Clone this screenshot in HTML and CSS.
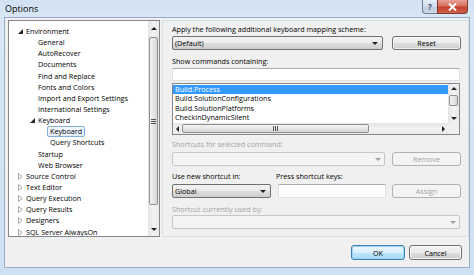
FILE: index.html
```html
<!DOCTYPE html>
<html>
<head>
<meta charset="utf-8">
<link rel="stylesheet" href="styles.css">
</head>
<body>
<div class="window">
  <div class="titlebar">
    <span class="title">Options</span>
    <div class="caption">
      <div class="cbtn help">?</div>
      <div class="cbtn close">
        <svg width="9" height="8" viewBox="0 0 9 8"><path d="M1 0.5 L8 7.5 M8 0.5 L1 7.5" stroke="#fff" stroke-width="2"/></svg>
      </div>
    </div>
  </div>
  <div class="client">
    <div class="main">
      <div class="tree">
        <div class="tree-items">
          <div class="row lvl0"><span class="exp"><svg width="5" height="5" viewBox="0 0 5 5"><polygon points="5,0 5,5 0,5" fill="#262626"/></svg></span><span>Environment</span></div>
          <div class="row lvl1"><span class="exp"></span><span>General</span></div>
          <div class="row lvl1"><span class="exp"></span><span>AutoRecover</span></div>
          <div class="row lvl1"><span class="exp"></span><span>Documents</span></div>
          <div class="row lvl1"><span class="exp"></span><span>Find and Replace</span></div>
          <div class="row lvl1"><span class="exp"></span><span>Fonts and Colors</span></div>
          <div class="row lvl1"><span class="exp"></span><span>Import and Export Settings</span></div>
          <div class="row lvl1"><span class="exp"></span><span>International Settings</span></div>
          <div class="row lvl1"><span class="exp"><svg width="5" height="5" viewBox="0 0 5 5"><polygon points="5,0 5,5 0,5" fill="#262626"/></svg></span><span>Keyboard</span></div>
          <div class="row lvl2"><span class="exp"></span><span class="sel">Keyboard</span></div>
          <div class="row lvl2"><span class="exp"></span><span>Query Shortcuts</span></div>
          <div class="row lvl1"><span class="exp"></span><span>Startup</span></div>
          <div class="row lvl1"><span class="exp"></span><span>Web Browser</span></div>
          <div class="row lvl0"><span class="exp"><svg width="5" height="7" viewBox="0 0 5 7"><polygon points="0.5,0.5 4.2,3.5 0.5,6.5" fill="none" stroke="#a8a8a8" stroke-width="1"/></svg></span><span>Source Control</span></div>
          <div class="row lvl0"><span class="exp"><svg width="5" height="7" viewBox="0 0 5 7"><polygon points="0.5,0.5 4.2,3.5 0.5,6.5" fill="none" stroke="#a8a8a8" stroke-width="1"/></svg></span><span>Text Editor</span></div>
          <div class="row lvl0"><span class="exp"><svg width="5" height="7" viewBox="0 0 5 7"><polygon points="0.5,0.5 4.2,3.5 0.5,6.5" fill="none" stroke="#a8a8a8" stroke-width="1"/></svg></span><span>Query Execution</span></div>
          <div class="row lvl0"><span class="exp"><svg width="5" height="7" viewBox="0 0 5 7"><polygon points="0.5,0.5 4.2,3.5 0.5,6.5" fill="none" stroke="#a8a8a8" stroke-width="1"/></svg></span><span>Query Results</span></div>
          <div class="row lvl0"><span class="exp"><svg width="5" height="7" viewBox="0 0 5 7"><polygon points="0.5,0.5 4.2,3.5 0.5,6.5" fill="none" stroke="#a8a8a8" stroke-width="1"/></svg></span><span>Designers</span></div>
          <div class="row lvl0"><span class="exp"><svg width="5" height="7" viewBox="0 0 5 7"><polygon points="0.5,0.5 4.2,3.5 0.5,6.5" fill="none" stroke="#a8a8a8" stroke-width="1"/></svg></span><span>SQL Server AlwaysOn</span></div>
        </div>
        <div class="vscroll tree-scroll">
          <div class="sbtn"><span class="arr-up"></span></div>
          <div class="thumb tree-thumb"><span class="grip"></span></div>
          <div class="spacer"></div>
          <div class="sbtn"><span class="arr-down"></span></div>
        </div>
      </div>
      <div class="panel">
        <div class="label l1">Apply the following additional keyboard mapping scheme:</div>
        <div class="line r1">
          <div class="combo combo-scheme"><span>(Default)</span><span class="arr-down"></span></div>
          <div class="btn">Reset</div>
        </div>
        <div class="label l2">Show commands containing:</div>
        <div class="textbox tb-full"></div>
        <div class="listbox">
          <div class="list-body">
            <div class="items">
              <div class="item selected">Build.Process</div>
              <div class="item">Build.SolutionConfigurations</div>
              <div class="item">Build.SolutionPlatforms</div>
              <div class="item">CheckInDynamicSilent</div>
            </div>
            <div class="vscroll list-vscroll">
              <div class="sbtn small"><span class="arr-up"></span></div>
              <div class="thumb list-thumb"></div>
              <div class="spacer"></div>
              <div class="sbtn small"><span class="arr-down"></span></div>
            </div>
          </div>
          <div class="hbar">
            <div class="hscroll">
              <div class="hbtn"><span class="arr-left"></span></div>
              <div class="hthumb"><span class="hgrip"></span></div>
              <div class="spacer"></div>
              <div class="hbtn"><span class="arr-right"></span></div>
            </div>
            <div class="corner"></div>
          </div>
        </div>
        <div class="label disabled l3">Shortcuts for selected command:</div>
        <div class="line r2">
          <div class="combo disabled combo-mid"><span></span><span class="arr-down gray"></span></div>
          <div class="btn disabled">Remove</div>
        </div>
        <div class="labels-row">
          <div class="label col-a">Use new shortcut in:</div>
          <div class="label">Press shortcut keys:</div>
        </div>
        <div class="line r3">
          <div class="combo combo-global"><span>Global</span><span class="arr-down"></span></div>
          <div class="textbox tb-keys"></div>
          <div class="btn disabled">Assign</div>
        </div>
        <div class="label disabled l5">Shortcut currently used by:</div>
        <div class="combo disabled combo-full"><span></span><span class="arr-down gray"></span></div>
      </div>
    </div>
    <div class="footer">
      <div class="btn ok">OK</div>
      <div class="btn cancel">Cancel</div>
    </div>
  </div>
</div>
</body>
</html>
```
FILE: styles.css
```css
* { box-sizing: border-box; }
html, body { margin: 0; padding: 0; }
body {
  font-family: "Open Sans", "Noto Sans", sans-serif;
  font-size: 7.2px;
  color: #000;
  background: #d6e5f5;
}
.window {
  width: 474px;
  height: 275px;
  overflow: hidden;
  background: linear-gradient(180deg, #d2e2f3 0px, #d9e7f6 20px, #cfe0f2 270px);
  display: flex;
  flex-direction: column;
}
.titlebar {
  height: 17px;
  display: flex;
  align-items: flex-start;
  justify-content: space-between;
  flex: none;
}
.title {
  font-size: 9px;
  margin-left: 5px;
  margin-top: 2px;
  line-height: 13px;
}
.caption {
  display: flex;
  margin-right: 6px;
}
.cbtn {
  height: 14px;
  display: flex;
  align-items: center;
  justify-content: center;
  border: 1px solid #6d7f95;
  border-top: none;
}
.help {
  width: 15px;
  background: linear-gradient(180deg, #e6eef7 0%, #cfdbe9 50%, #bccbdd 51%, #cfdbea 100%);
  border-radius: 0 0 0 4px;
  border-right: none;
  font-size: 8px;
  font-weight: bold;
  color: #3b4a5e;
}
.close {
  width: 31px;
  background: linear-gradient(180deg, #e8a294 0%, #d67060 45%, #c3412e 55%, #d2604c 100%);
  border-color: #7e3a31;
  border-radius: 0 0 4px 0;
}
.client {
  margin: 0 4px;
  height: 251px;
  background: #f0f0f0;
  border: 1px solid #98adc4;
  display: flex;
  flex-direction: column;
}
.main {
  display: flex;
  margin-top: 2px;
  margin-left: 3px;
  height: 217px;
  gap: 2px;
}
.tree {
  width: 152px;
  height: 217px;
  background: #fff;
  border: 1px solid #828790;
  display: flex;
  overflow: hidden;
}
.tree-items {
  flex: 1;
  padding-top: 5px;
  overflow: hidden;
}
.row {
  height: 11.15px;
  line-height: 11px;
  display: flex;
  align-items: center;
  white-space: nowrap;
}
.lvl0 { padding-left: 8px; }
.lvl1 { padding-left: 20px; }
.lvl2 { padding-left: 32px; }
.exp {
  width: 9px;
  flex: none;
  display: flex;
  align-items: center;
  padding-left: 1px;
}
.sel {
  border: 1px solid #84acdd;
  background: linear-gradient(180deg, #f4f9fe, #e4effc);
  border-radius: 2px;
  padding: 0 2px;
  margin-left: -3px;
  line-height: 9px;
}
.vscroll {
  width: 11px;
  flex: none;
  display: flex;
  flex-direction: column;
  background: linear-gradient(90deg, #e4e4e4, #f2f2f2 50%, #e9e9e9);
}
.sbtn {
  height: 14px;
  display: flex;
  align-items: center;
  justify-content: center;
  flex: none;
}
.sbtn.small { height: 9px; }
.spacer { flex: 1; }
.thumb {
  margin: 0 1px;
  border: 1px solid #8e8f8f;
  border-radius: 2px;
  background: linear-gradient(90deg, #f3f3f3, #e6e6e6 50%, #d6d6d6);
  display: flex;
  align-items: center;
  justify-content: center;
  flex: none;
}
.tree-thumb { height: 168px; margin-top: 2px; }
.list-thumb { height: 11px; margin-top: 2px; }
.grip {
  width: 5px;
  height: 5px;
  border-top: 1px solid #555;
  border-bottom: 1px solid #555;
  position: relative;
}
.grip::after {
  content: "";
  position: absolute;
  left: 0;
  right: 0;
  top: 1px;
  border-top: 1px solid #555;
}
.arr-up, .arr-down, .arr-left, .arr-right {
  width: 0;
  height: 0;
  display: inline-block;
}
.arr-up {
  border-left: 3px solid transparent;
  border-right: 3px solid transparent;
  border-bottom: 3px solid #222;
}
.arr-down {
  border-left: 3px solid transparent;
  border-right: 3px solid transparent;
  border-top: 3px solid #222;
}
.arr-down.gray { border-top-color: #a0a0a0; }
.arr-left {
  border-top: 3px solid transparent;
  border-bottom: 3px solid transparent;
  border-right: 3px solid #222;
}
.arr-right {
  border-top: 3px solid transparent;
  border-bottom: 3px solid transparent;
  border-left: 3px solid #222;
}
.panel {
  width: 307px;
  height: 217px;
  border: 1px solid #d5dfe5;
  padding: 0 7px 0 9px;
  display: flex;
  flex-direction: column;
}
.label {
  height: 10px;
  line-height: 10px;
  white-space: nowrap;
  flex: none;
}
.label.disabled { color: #a3a3a3; }
.l1 { margin-top: 3px; }
.l2 { margin-top: 6px; }
.l3 { margin-top: 4px; }
.l5 { margin-top: 6px; }
.line {
  display: flex;
  justify-content: space-between;
  flex: none;
  height: 14px;
}
.r1 { margin-top: 2px; }
.r2 { margin-top: 3px; }
.r3 { margin-top: 3px; }
.combo {
  height: 14px;
  border: 1px solid #707070;
  border-radius: 2px;
  background: linear-gradient(180deg, #f2f2f2 0%, #ebebeb 50%, #dddddd 51%, #cfcfcf 100%);
  display: flex;
  align-items: center;
  justify-content: space-between;
  padding: 0 4px 0 2px;
  flex: none;
}
.combo.disabled {
  border-color: #c5c7c9;
  background: #f4f4f4;
  padding-right: 3px;
}
.combo-scheme { width: 211px; }
.combo-mid { width: 213px; }
.combo-global { width: 99px; }
.combo-full { width: 288px; margin-top: 1px; }
.btn {
  width: 69px;
  height: 14px;
  border: 1px solid #707070;
  border-radius: 3px;
  background: linear-gradient(180deg, #f2f2f2 0%, #ebebeb 50%, #dddddd 51%, #cfcfcf 100%);
  display: flex;
  align-items: center;
  justify-content: center;
  flex: none;
  box-shadow: inset 0 0 0 1px rgba(255,255,255,0.7);
}
.btn.disabled {
  border-color: #adb2b5;
  background: #f4f4f4;
  color: #a3a3a3;
  box-shadow: none;
}
.textbox {
  background: #fff;
  border: 1px solid #dde2e8;
  border-top-color: #abadb3;
  flex: none;
}
.tb-full { height: 13px; margin-top: 2px; width: 288px; }
.tb-keys { width: 108px; height: 14px; }
.listbox {
  margin-top: 2px;
  height: 52px;
  width: 288px;
  border: 1px solid #828790;
  background: #fff;
  flex: none;
  display: flex;
  flex-direction: column;
}
.list-body {
  display: flex;
  height: 39px;
}
.items {
  flex: 1;
  padding-top: 1px;
  overflow: hidden;
}
.item {
  height: 9.3px;
  line-height: 9.3px;
  padding-left: 2px;
  white-space: nowrap;
}
.item.selected {
  background: #3399ff;
  color: #fff;
}
.list-vscroll { height: 39px; }
.hbar {
  display: flex;
  height: 11px;
}
.hscroll {
  flex: 1;
  display: flex;
  align-items: center;
  background: linear-gradient(180deg, #e4e4e4, #f2f2f2 50%, #e9e9e9);
}
.hbtn {
  width: 9px;
  height: 11px;
  display: flex;
  align-items: center;
  justify-content: center;
  flex: none;
}
.hthumb {
  width: 187px;
  height: 9px;
  border: 1px solid #8e8f8f;
  border-radius: 2px;
  background: linear-gradient(180deg, #f3f3f3, #e6e6e6 50%, #d6d6d6);
  display: flex;
  align-items: center;
  justify-content: center;
  flex: none;
}
.hgrip {
  width: 5px;
  height: 5px;
  border-left: 1px solid #555;
  border-right: 1px solid #555;
  position: relative;
}
.hgrip::after {
  content: "";
  position: absolute;
  top: 0;
  bottom: 0;
  left: 1px;
  border-left: 1px solid #555;
}
.corner {
  width: 11px;
  background: #f0f0f0;
}
.labels-row {
  display: flex;
  margin-top: 5px;
  flex: none;
}
.col-a { width: 104px; }
.footer {
  display: flex;
  justify-content: flex-end;
  gap: 4px;
  margin-top: 8px;
  padding-right: 7px;
}
.footer .btn { height: 15px; }
.ok {
  width: 54px;
  border-color: #3c7fb1;
  box-shadow: inset 0 0 0 1px #9fd5f3;
  background: linear-gradient(180deg, #eaf6fd 0%, #d9f0fc 50%, #bee6fd 51%, #a7d9f5 100%);
}
.cancel { width: 53px; }
```
